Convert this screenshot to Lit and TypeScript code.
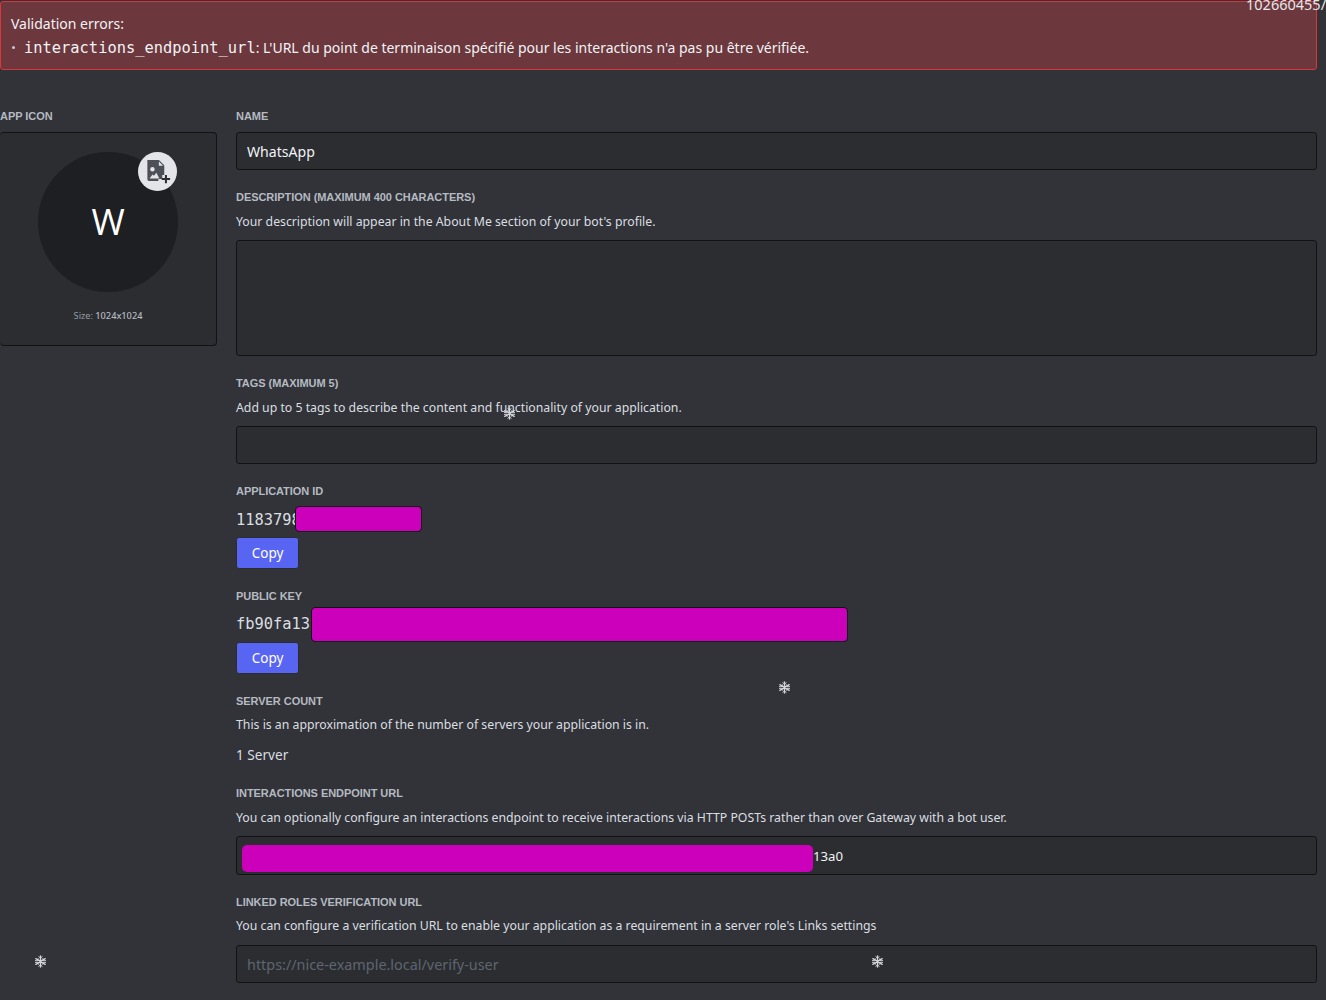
import { LitElement, html, css } from "lit";
import { customElement } from "lit/decorators.js";

const flake = (cls: string) => html`<svg class="flake ${cls}" viewBox="0 0 14 14" aria-hidden="true">
  <g stroke="#d4d6d9" stroke-width="1.5" stroke-linecap="round" fill="none">
    <path d="M7 1v12M2 4l10 6M12 4L2 10" />
    <path d="M5.2 1.8L7 3.4l1.8-1.6M5.2 12.2L7 10.6l1.8 1.6M1.5 6l2.3.2L4.6 4M12.5 8l-2.3-.2L9.4 10M12.5 6l-2.3.2L9.4 4M1.5 8l2.3-.2L4.6 10" stroke-width="1"/>
  </g>
</svg>`;

@customElement("app-root")
export class AppRoot extends LitElement {
  static styles = css`
    :host {
      display: block;
      position: relative;
      height: 1000px;
      overflow: hidden;
      background: #313338;
      color: #dbdee1;
      font-family: "Noto Sans", "Liberation Sans", sans-serif;
      font-size: 13px;
      padding-right: 9px;
      box-sizing: border-box;
    }
    .banner {
      margin-top: 1px;
      height: 69px;
      box-sizing: border-box;
      background: #6c383e;
      border: 1px solid #da373c;
      border-radius: 3px;
      padding: 9.5px 10px 0;
      font-size: 14px;
      color: #f2f3f5;
      line-height: 22px;
      margin-bottom: 38px;
    }
    .banner-line { display: flex; align-items: center; height: 24px; }
    .bullet { width: 3px; height: 3px; border-radius: 50%; background: #c9ccd1; margin: 0 9px 0 1px; }
    .mono { font-family: "DejaVu Sans Mono", monospace; }
    .banner .mono { font-size: 15.4px; }
    .stray { position: absolute; top: -6px; left: 1246px; font-size: 14.5px; line-height: 20px; color: #e6e7e9; white-space: nowrap; }
    .layout { display: grid; grid-template-columns: 217px 1fr; column-gap: 19px; }
    .label {
      font-family: "Liberation Sans", Arial, sans-serif;
      font-size: 11px;
      font-weight: 700;
      line-height: 16px;
      color: #b5bac1;
      text-transform: uppercase;
      letter-spacing: -0.05px;
    }
    .card {
      margin-top: 8px;
      height: 214px;
      box-sizing: border-box;
      background: #2b2d31;
      border: 1px solid #111214;
      border-left: none;
      border-radius: 4px;
      display: flex;
      flex-direction: column;
      align-items: center;
      padding-top: 19px;
    }
    .avatar {
      position: relative;
      width: 140px;
      height: 140px;
      box-sizing: border-box;
      padding-bottom: 2px;
      border-radius: 50%;
      background: #1e1f22;
      color: #fff;
      font-family: "Open Sans", sans-serif;
      font-size: 36px;
      display: flex;
      align-items: center;
      justify-content: center;
    }
    .upload {
      position: absolute;
      top: 0;
      right: 1px;
      width: 39px;
      height: 39px;
      box-sizing: border-box;
      border-radius: 50%;
      background: #e3e5e8;
      display: flex;
      align-items: center;
      justify-content: center;
    }
    .upload svg { width: 27px; height: 27px; }
    .size { margin-top: 17px; font-size: 9.2px; line-height: 14px; color: #949ba4; }
    .size b { font-weight: 500; color: #b5bac1; }
    .fields { display: flex; flex-direction: column; }
    .field { margin-bottom: 19px; display: flex; flex-direction: column; align-items: flex-start; }
    .help { font-size: 12.28px; line-height: 20px; margin-top: 6px; color: #dbdee1; white-space: nowrap; }
    .box {
      width: 100%;
      height: 38px;
      box-sizing: border-box;
      margin-top: 8px;
      background: #2b2d31;
      border: 1px solid #111214;
      border-radius: 3px;
      padding: 0 10px;
      font-size: 14.1px;
      display: flex;
      align-items: center;
      color: #f2f3f5;
    }
    .help + .box { margin-top: 9px; }
    .help.low { margin-top: 7px; }
    .help.low + .box { margin-top: 8px; }
    .tall { height: 116px; }
    .ph { color: #5f6570; font-size: 14.4px; }
    .id-row { position: relative; height: 26px; margin-top: 7px; box-sizing: border-box; padding-top: 2px; display: flex; align-items: center; font-size: 15.4px; color: #dbdee1; width: 100%; }
    .id-row.key { height: 35px; margin-top: 3px; padding-top: 0; padding-bottom: 2px; }
    .redact { background: #cc00bb; border: 1px solid #111214; border-radius: 4px; box-sizing: border-box; }
    .id-row .redact { position: absolute; top: 0; bottom: 0; }
    .r-id { left: 59px; width: 127px; }
    .r-key { left: 75px; width: 537px; }
    .copy {
      margin-top: 5px;
      width: 63px;
      height: 32px;
      box-sizing: border-box;
      border: 1px solid #2b2d31;
      border-radius: 3px;
      background: #5865f2;
      color: #fff;
      font: 400 13.5px "Noto Sans", sans-serif;
      padding: 0;
    }
    .key + .copy { margin-top: 0; }
    .count { font-size: 13.6px; line-height: 20px; margin-top: 10px; color: #dbdee1; margin-bottom: 1px; }
    .endpoint { padding: 0 0 0 5px; height: 39px; font-size: 13.2px; }
    .endpoint .redact { width: 571px; height: 27px; border: none; border-radius: 5px; margin-top: 6px; }
    .flake { position: absolute; width: 13px; height: 13px; }
    .f1 { left: 503px; top: 407px; }
    .f2 { left: 778px; top: 681px; }
    .f3 { left: 34px; top: 955px; }
    .f4 { left: 871px; top: 955px; }
  `;

  render() {
    return html`
      <div class="banner">
        <div class="banner-line">Validation errors:</div>
        <div class="banner-line">
          <span class="bullet"></span><span class="mono">interactions_endpoint_url</span>: L'URL du point de terminaison spécifié pour les interactions n'a pas pu être vérifiée.
        </div>
      </div>
      <div class="stray">102660455/</div>
      <div class="layout">
        <div>
          <div class="label">App Icon</div>
          <div class="card">
            <div class="avatar">W
              <div class="upload">
                <svg viewBox="0 0 24 24" aria-hidden="true">
                  <path fill="#4e5058" fill-rule="evenodd" d="M3 1.8h10.3L18 6.5v8.7h-1.8v3.4h-3.4v1.8H4.5A1.5 1.5 0 0 1 3 18.9zM13.2 3v3.8H17zM7.5 8a2 2 0 1 0 0 4 2 2 0 0 0 0-4zM5 18.2h8.6l-2.6-5-2.2 2.6-1.3-1.2z"/>
                  <path stroke="#2b2d31" stroke-width="1.8" d="M19.5 15v7.4M15.8 18.7h7.4"/>
                </svg>
              </div>
            </div>
            <div class="size">Size: <b>1024x1024</b></div>
          </div>
        </div>
        <div class="fields">
          <div class="field">
            <div class="label">Name</div>
            <div class="box">WhatsApp</div>
          </div>
          <div class="field">
            <div class="label">Description (maximum 400 characters)</div>
            <div class="help low">Your description will appear in the About Me section of your bot's profile.</div>
            <div class="box tall"></div>
          </div>
          <div class="field">
            <div class="label">Tags (maximum 5)</div>
            <div class="help low">Add up to 5 tags to describe the content and functionality of your application.</div>
            <div class="box"></div>
          </div>
          <div class="field">
            <div class="label">Application ID</div>
            <div class="id-row mono">1183798<div class="redact r-id"></div></div>
            <button class="copy">Copy</button>
          </div>
          <div class="field">
            <div class="label">Public Key</div>
            <div class="id-row key mono">fb90fa133<div class="redact r-key"></div></div>
            <button class="copy">Copy</button>
          </div>
          <div class="field">
            <div class="label">Server Count</div>
            <div class="help">This is an approximation of the number of servers your application is in.</div>
            <div class="count">1 Server</div>
          </div>
          <div class="field">
            <div class="label">Interactions Endpoint URL</div>
            <div class="help low">You can optionally configure an interactions endpoint to receive interactions via HTTP POSTs rather than over Gateway with a bot user.</div>
            <div class="box endpoint"><div class="redact"></div>13a0</div>
          </div>
          <div class="field">
            <div class="label">Linked Roles Verification URL</div>
            <div class="help">You can configure a verification URL to enable your application as a requirement in a server role's Links settings</div>
            <div class="box ph">https://nice-example.local/verify-user</div>
          </div>
        </div>
      </div>
      ${flake("f1")}${flake("f2")}${flake("f3")}${flake("f4")}
    `;
  }
}
